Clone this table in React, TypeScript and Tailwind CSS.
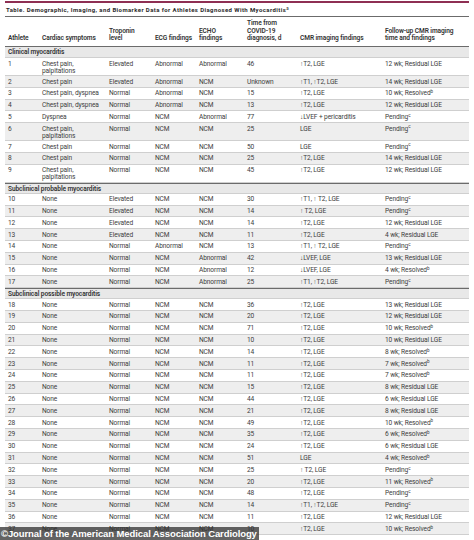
import React from "react";

type Row = {
  id: string;
  symptoms: string[];
  troponin: string;
  ecg: string;
  echo: string;
  time: string;
  cmr: string;
  followUp: string;
  sup?: string;
};

type Section = { title: string; rows: Row[] };

const cols = "grid grid-cols-[34px_67px_46px_44px_48px_53px_85px_87px]";

const possible = (id: string, time: string, followUp: string, sup?: string, cmr = "↑T2, LGE"): Row => ({
  id,
  symptoms: ["None"],
  troponin: "Normal",
  ecg: "NCM",
  echo: "NCM",
  time,
  cmr,
  followUp,
  sup,
});

const sections: Section[] = [
  {
    title: "Clinical myocarditis",
    rows: [
      { id: "1", symptoms: ["Chest pain,", "palpitations"], troponin: "Elevated", ecg: "Abnormal", echo: "Abnormal", time: "46", cmr: "↑T2, LGE", followUp: "12 wk; Residual LGE" },
      { id: "2", symptoms: ["Chest pain"], troponin: "Elevated", ecg: "Abnormal", echo: "NCM", time: "Unknown", cmr: "↑T1, ↑T2, LGE", followUp: "14 wk; Residual LGE" },
      { id: "3", symptoms: ["Chest pain, dyspnea"], troponin: "Normal", ecg: "Abnormal", echo: "NCM", time: "15", cmr: "↑T2, LGE", followUp: "10 wk; Resolved", sup: "b" },
      { id: "4", symptoms: ["Chest pain, dyspnea"], troponin: "Normal", ecg: "Abnormal", echo: "NCM", time: "13", cmr: "↑T2, LGE", followUp: "12 wk; Residual LGE" },
      { id: "5", symptoms: ["Dyspnea"], troponin: "Normal", ecg: "NCM", echo: "Abnormal", time: "77", cmr: "↓LVEF + pericarditis", followUp: "Pending", sup: "c" },
      { id: "6", symptoms: ["Chest pain,", "palpitations"], troponin: "Normal", ecg: "NCM", echo: "NCM", time: "25", cmr: "LGE", followUp: "Pending", sup: "c" },
      { id: "7", symptoms: ["Chest pain"], troponin: "Normal", ecg: "NCM", echo: "NCM", time: "50", cmr: "LGE", followUp: "Pending", sup: "c" },
      { id: "8", symptoms: ["Chest pain"], troponin: "Normal", ecg: "NCM", echo: "NCM", time: "25", cmr: "↑T2, LGE", followUp: "14 wk; Residual LGE" },
      { id: "9", symptoms: ["Chest pain,", "palpitations"], troponin: "Normal", ecg: "NCM", echo: "NCM", time: "45", cmr: "↑T2, LGE", followUp: "12 wk; Residual LGE" },
    ],
  },
  {
    title: "Subclinical probable myocarditis",
    rows: [
      { id: "10", symptoms: ["None"], troponin: "Elevated", ecg: "NCM", echo: "NCM", time: "30", cmr: "↑T1, ↑ T2, LGE", followUp: "Pending", sup: "c" },
      { id: "11", symptoms: ["None"], troponin: "Elevated", ecg: "NCM", echo: "NCM", time: "14", cmr: "↑ T2, LGE", followUp: "Pending", sup: "c" },
      { id: "12", symptoms: ["None"], troponin: "Elevated", ecg: "NCM", echo: "NCM", time: "14", cmr: "↑T2, LGE", followUp: "12 wk; Residual LGE" },
      { id: "13", symptoms: ["None"], troponin: "Elevated", ecg: "NCM", echo: "NCM", time: "11", cmr: "↑T2, LGE", followUp: "4 wk; Residual LGE" },
      { id: "14", symptoms: ["None"], troponin: "Normal", ecg: "Abnormal", echo: "NCM", time: "13", cmr: "↑T1, ↑ T2, LGE", followUp: "Pending", sup: "c" },
      { id: "15", symptoms: ["None"], troponin: "Normal", ecg: "NCM", echo: "Abnormal", time: "42", cmr: "↓LVEF, LGE", followUp: "13 wk; Residual LGE" },
      { id: "16", symptoms: ["None"], troponin: "Normal", ecg: "NCM", echo: "Abnormal", time: "12", cmr: "↓LVEF, LGE", followUp: "4 wk; Resolved", sup: "b" },
      { id: "17", symptoms: ["None"], troponin: "Normal", ecg: "NCM", echo: "Abnormal", time: "25", cmr: "↑T1, ↑T2, LGE", followUp: "Pending", sup: "c" },
    ],
  },
  {
    title: "Subclinical possible myocarditis",
    rows: [
      possible("18", "36", "13 wk; Residual LGE"),
      possible("19", "20", "12 wk; Residual LGE"),
      possible("20", "71", "10 wk; Resolved", "b"),
      possible("21", "10", "10 wk; Residual LGE"),
      possible("22", "14", "8 wk; Resolved", "b"),
      possible("23", "11", "7 wk; Resolved", "b"),
      possible("24", "11", "7 wk; Resolved", "b"),
      possible("25", "15", "8 wk; Residual LGE"),
      possible("26", "44", "6 wk; Residual LGE"),
      possible("27", "21", "8 wk; Residual LGE"),
      possible("28", "49", "10 wk; Resolved", "b"),
      possible("29", "35", "6 wk; Resolved", "b"),
      possible("30", "24", "6 wk; Residual LGE"),
      possible("31", "51", "4 wk; Resolved", "b", "LGE"),
      possible("32", "25", "Pending", "c", "↑ T2, LGE"),
      possible("33", "20", "11 wk; Resolved", "b"),
      possible("34", "48", "Pending", "c"),
      possible("35", "14", "Pending", "c", "↑T1, ↑T2, LGE"),
      possible("36", "11", "12 wk; Residual LGE"),
      possible("37", "10", "10 wk; Resolved", "b"),
    ],
  },
];

const Cell = ({ children }: { children: React.ReactNode }) => (
  <div className="pl-[3px] pt-[2.5px] leading-[7px] whitespace-nowrap">{children}</div>
);

const DataRow = ({ row, shaded }: { row: Row; shaded: boolean }) => {
  const tall = row.symptoms.length > 1;
  return (
    <div
      className={`${cols} border-b border-[#cfcfcf] ${tall ? "h-[18px]" : "h-[11.8px]"} ${
        shaded ? "bg-[#eeeeee]" : "bg-white"
      }`}
    >
      <Cell>{row.id}</Cell>
      <Cell>
        {row.symptoms.map((s) => (
          <div key={s}>{s}</div>
        ))}
      </Cell>
      <Cell>{row.troponin}</Cell>
      <Cell>{row.ecg}</Cell>
      <Cell>{row.echo}</Cell>
      <Cell>{row.time}</Cell>
      <Cell>{row.cmr}</Cell>
      <Cell>
        {row.followUp}
        {row.sup && <sup className="text-[4.5px]">{row.sup}</sup>}
      </Cell>
    </div>
  );
};

const headers: string[][] = [
  ["Athlete"],
  ["Cardiac symptoms"],
  ["Troponin", "level"],
  ["ECG findings"],
  ["ECHO", "findings"],
  ["Time from", "COVID-19", "diagnosis, d"],
  ["CMR imaging findings"],
  ["Follow-up CMR imaging", "time and findings"],
];

export default function App() {
  return (
    <div className="relative h-[540px] w-[474px] overflow-hidden bg-white font-['Roboto',sans-serif] text-[6.6px] tracking-[-0.1px] text-[#3d3d3d]">
      <div className="mx-[5px] mt-[1px] border-t-2 border-[#8e2f53]">
        <div className="h-[14px] border-b border-[#6b6b6b] pl-[1px] text-[6px] font-bold leading-[14px] tracking-[0.4px] text-[#2b2b2b]">
          Table. Demographic, Imaging, and Biomarker Data for Athletes Diagnosed With Myocarditis
          <sup className="text-[4.5px] font-normal">a</sup>
        </div>

        <div className={`${cols} h-[30px] items-end border-b-[1.5px] border-[#6b6b6b] pb-[3px] font-semibold text-[#333]`}>
          {headers.map((h) => (
            <div key={h[0]} className="pl-[3px] leading-[7.6px]">
              {h.map((line) => (
                <div key={line} className="whitespace-nowrap">
                  {line}
                </div>
              ))}
            </div>
          ))}
        </div>

        {sections.map((section, si) => (
          <div key={section.title}>
            <div
              className={`h-[11px] border-b border-[#cfcfcf] bg-[#e8e8e8] pl-[3px] pt-[2px] font-semibold leading-[7px] text-[#333] ${
                si > 0 ? "border-t-[1.5px] border-t-[#6b6b6b]" : ""
              }`}
            >
              {section.title}
            </div>
            {section.rows.map((row, ri) => (
              <DataRow key={row.id} row={row} shaded={ri % 2 === 1} />
            ))}
          </div>
        ))}
      </div>

      <div className="absolute left-0 top-[527px] h-[16px] w-[259px] bg-[#2f2f2f]/75 pl-[1px] font-['Liberation_Sans',Arial,sans-serif] text-[9.5px] font-bold leading-[14px] tracking-[-0.1px] text-white">
        ©Journal of the American Medical Association Cardiology
      </div>
    </div>
  );
}
